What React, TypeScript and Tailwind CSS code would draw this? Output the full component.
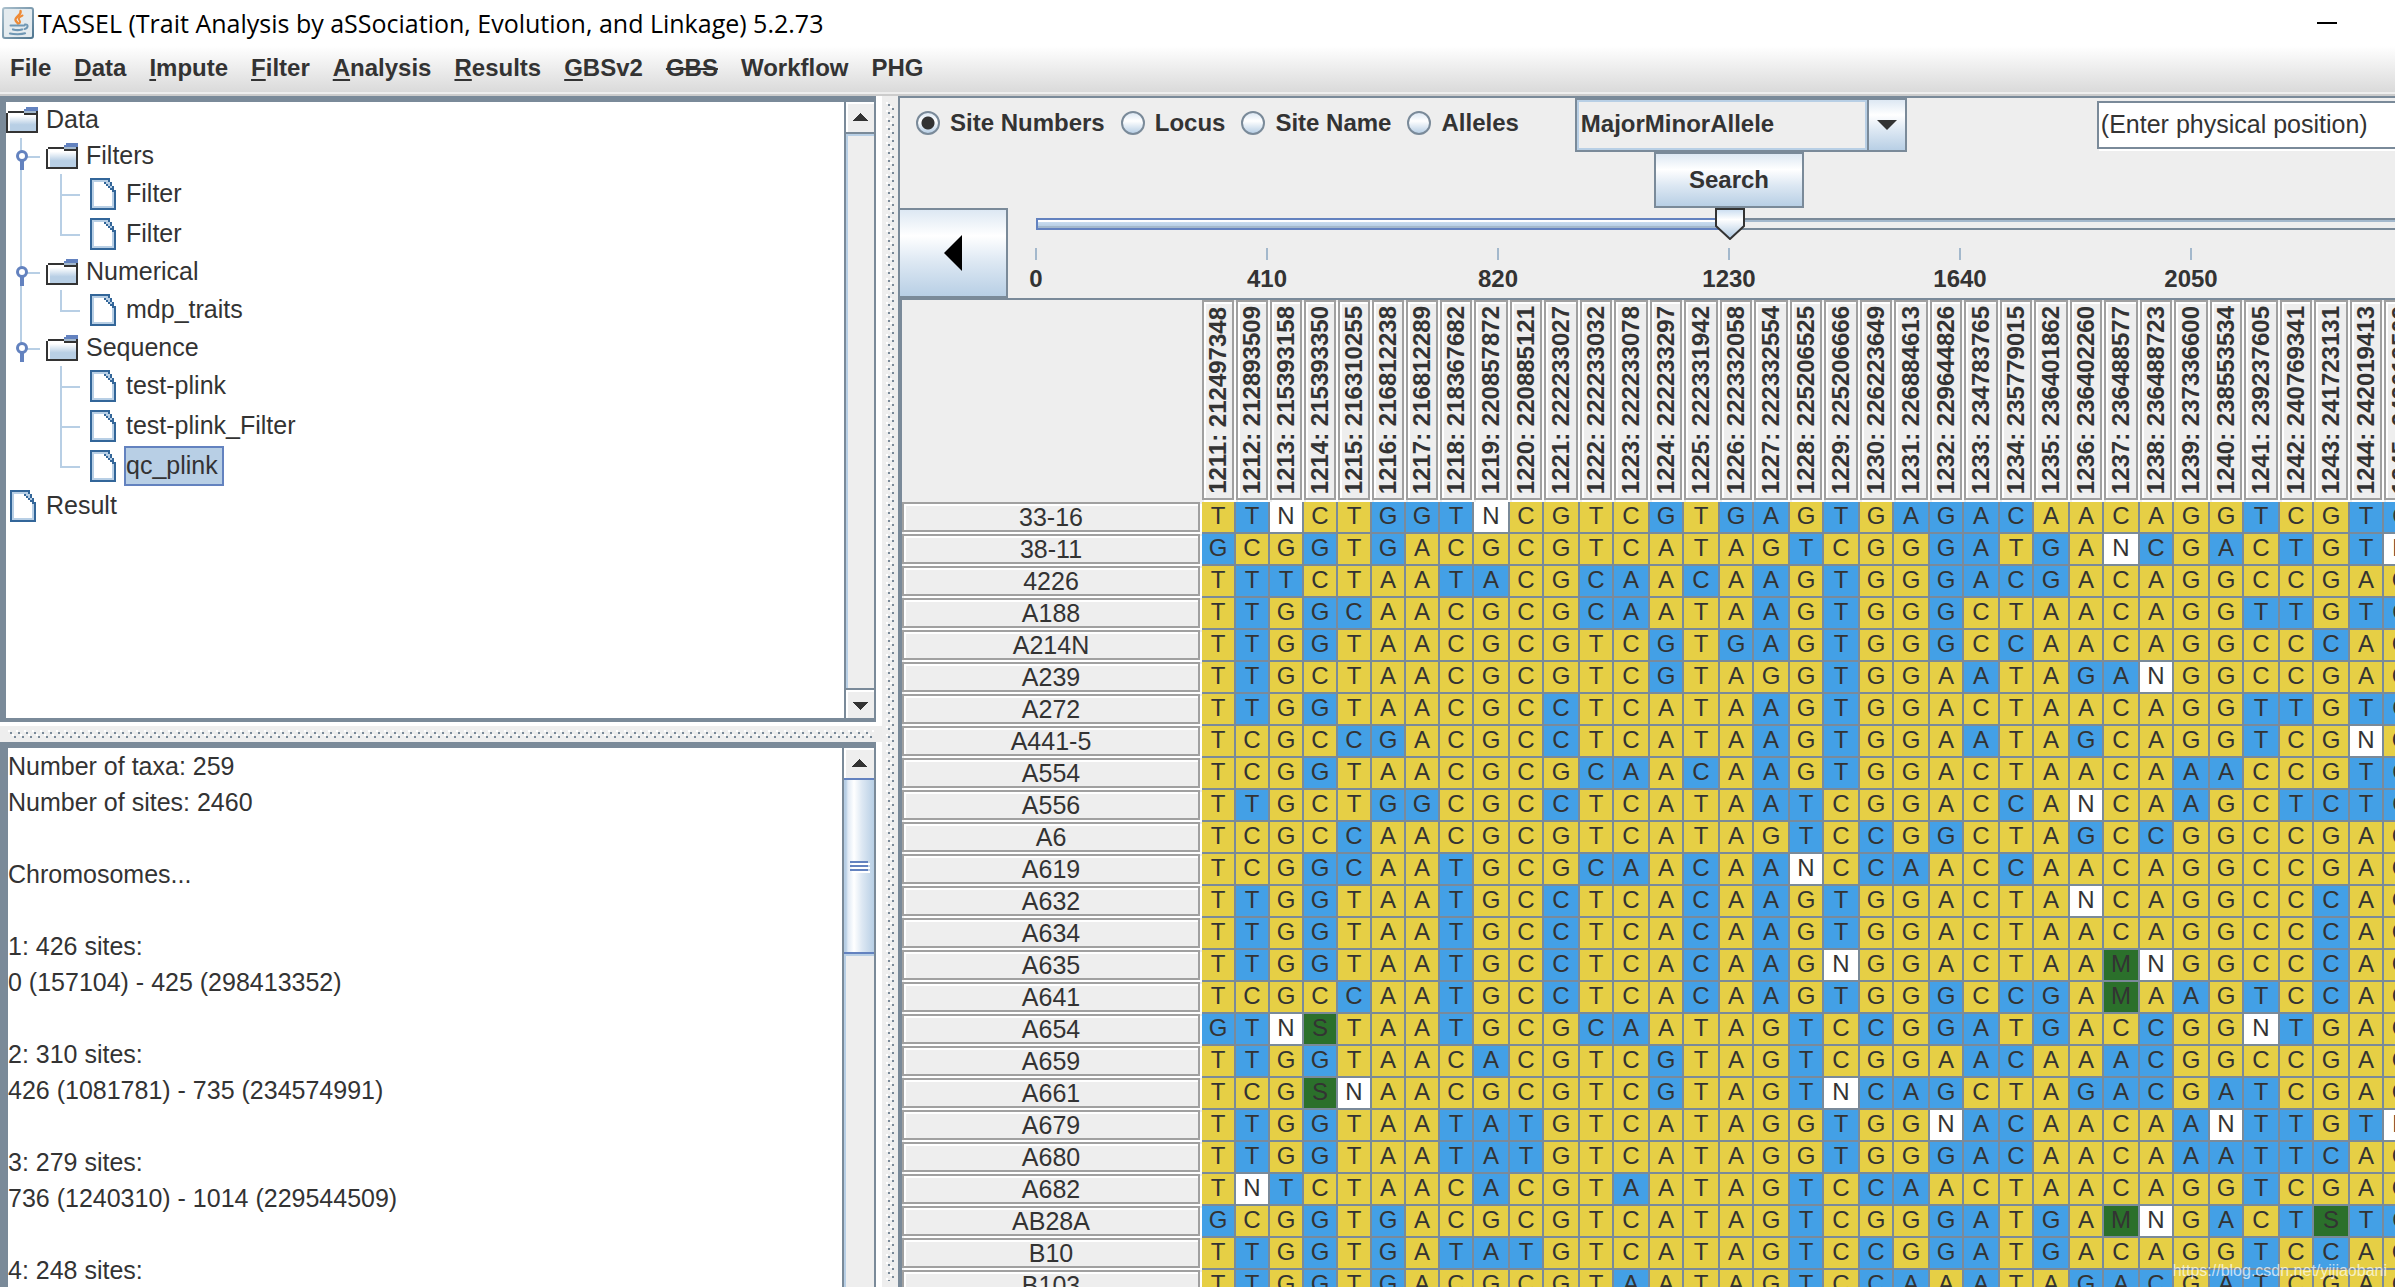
import { useState } from "react";

/* Capital = major allele, lower case = minor allele, N = unknown, M/S = heterozygous. */
const TAXA: [string, string][] = [
  ["33-16", "TtNCTggtNCGTCgTgaGtGagacAACAGGtCGtc"],
  ["38-11", "gCGgTgACGCGTCATAGtCGGgaTgANcGaCtGtN"],
  ["4226", "TttCTAAtaCGcaAcAaGtGGgacgACAGGCCGAG"],
  ["A188", "TtGgcAACGCGcaATAaGtGGgCTAACAGGttGtc"],
  ["A214N", "TtGgTAACGCGTCgTgaGtGGgCcAACAGGCCcAG"],
  ["A239", "TtGCTAACGCGTCgTAGGtGGAaTAgaNGGCCGAG"],
  ["A272", "TtGgTAACGCcTCATAaGtGGACTAACAGGttGtc"],
  ["A441-5", "TCGCcgACGCcTCATAaGtGGAaTAgCAGGtCGNG"],
  ["A554", "TCGgTAACGCGcaAcAaGtGGACTAACAaaCCGtc"],
  ["A556", "TtGCTggCGCcTCATAatCGGACcANCAaGCtctc"],
  ["A6", "TCGCcAACGCGTCATAGtCcGgCTAgCcGGCCGAG"],
  ["A619", "TCGgcAAtGCGcaAcAaNCcaACcAACAGGCCGAG"],
  ["A632", "TtGgTAAtGCcTCAcAaGtGGACTANCAGGCCcAG"],
  ["A634", "TtGgTAAtGCcTCAcAaGtGGACTAACAGGCCcAG"],
  ["A635", "TtGgTAAtGCcTCAcAaGNGGACTAAMNGGCCcAG"],
  ["A641", "TCGCcAAtGCcTCAcAaGtGGgCcgAMAaGtCcAG"],
  ["A654", "gtNSTAAtGCGcaATAGtCcGgaTgACcGGNtGAG"],
  ["A659", "TtGgTAACaCGTCgTAGtCGGAacAAacGGCCGAG"],
  ["A661", "TCGSNAACGCGTCgTAGtNcagCTAgacGatCGAG"],
  ["A679", "TtGgTAAtatGTCATAGGtGGNacAACAaNttGtN"],
  ["A680", "TtGgTAAtatGTCATAGGtGGgacAACAaattcAG"],
  ["A682", "TNtCTAACaCGTaATAGtCcaACTAACAGGtCGAG"],
  ["AB28A", "gCGgTgACGCGTCATAGtCGGgaTgAMNGaCtStc"],
  ["B10", "TtGgTgAtatGTCATAGtCcGgaTgACAGGtCcAG"],
  ["B103", "TtGgTgACGCGTaATAGtCcaAaTAgacGatCGAG"],
];

const SITES = [
  "1211: 212497348", "1212: 212893509", "1213: 215393158", "1214: 215393350", "1215: 216310255",
  "1216: 216812238", "1217: 216812289", "1218: 218367682", "1219: 220857872", "1220: 220885121",
  "1221: 222233027", "1222: 222233032", "1223: 222233078", "1224: 222233297", "1225: 222331942",
  "1226: 222332058", "1227: 222332554", "1228: 225206525", "1229: 225206666", "1230: 226223649",
  "1231: 226884613", "1232: 229644826", "1233: 234783765", "1234: 235779015", "1235: 236401862",
  "1236: 236402260", "1237: 236488577", "1238: 236488723", "1239: 237336600", "1240: 238553534",
  "1241: 239237605", "1242: 240769341", "1243: 241723131", "1244: 242019413", "1245: 242019509",
];

function cellColor(c: string) {
  if (c === "N") return "bg-white";
  if (c === "M" || c === "S") return "bg-[#2b702b]";
  return c === c.toUpperCase() ? "bg-[#e6cf45]" : "bg-[#43a0e6]";
}

const MENUS: [string, boolean, boolean][] = [
  ["File", false, false],
  ["Data", true, false],
  ["Impute", true, false],
  ["Filter", true, false],
  ["Analysis", true, false],
  ["Results", true, false],
  ["GBSv2", true, false],
  ["GBS", false, true],
  ["Workflow", false, false],
  ["PHG", false, false],
];

const REPORT = `Number of taxa: 259
Number of sites: 2460

Chromosomes...

1: 426 sites:
0 (157104) - 425 (298413352)

2: 310 sites:
426 (1081781) - 735 (234574991)

3: 279 sites:
736 (1240310) - 1014 (229544509)

4: 248 sites:`;

function JavaIcon() {
  return (
    <svg className="h-8 w-8" viewBox="0 0 32 32" aria-hidden="true">
      <defs>
        <linearGradient id="java-frame" x1="0" y1="0" x2="1" y2="1">
          <stop offset="0" stopColor="#a9bfcc" />
          <stop offset="1" stopColor="#4f7690" />
        </linearGradient>
      </defs>
      <rect x="1" y="1" width="30" height="30" rx="2" fill="#e4ebef" stroke="url(#java-frame)" strokeWidth="2" />
      <path d="M18.500 4c1.500 4-5.500 5.500-5 9 .3 1.600 1.800 2.400 2.500 3.500" fill="none" stroke="#ee8a35" strokeWidth="2.400" strokeLinecap="round" />
      <path d="M20.500 8.500c-3.500 1.500-4.500 3-3 5 1 1.400.5 2.300-.5 3" fill="none" stroke="#ee8a35" strokeWidth="2" strokeLinecap="round" />
      <path d="M8.500 18.500h14M23 17.500c3.500-.6 3.600 3.500-.6 4.600" fill="none" stroke="#6f97b4" strokeWidth="2" strokeLinecap="round" />
      <path d="M11 22.500c2.500.8 6.500.8 9 0M8 26.500c4 1 12 1 15-.2" fill="none" stroke="#6f97b4" strokeWidth="2.200" strokeLinecap="round" />
    </svg>
  );
}

function FolderIcon() {
  return (
    <svg className="h-[26px] w-8 shrink-0" viewBox="0 0 16 13" shapeRendering="crispEdges" aria-hidden="true">
      <defs>
        <linearGradient id="folder" x1="0" y1="0" x2="0" y2="1">
          <stop offset="0.150" stopColor="#fff" />
          <stop offset="0.650" stopColor="#b8cfe5" />
        </linearGradient>
      </defs>
      <rect x="0" y="3" width="1" height="10" fill="#333" />
      <rect x="1" y="2" width="8" height="1" fill="#333" />
      <rect x="15" y="2" width="1" height="11" fill="#333" />
      <rect x="0" y="12" width="16" height="1" fill="#333" />
      <rect x="1" y="3" width="14" height="9" fill="url(#folder)" />
      <rect x="1" y="3" width="1" height="9" fill="#fff" />
      <rect x="9" y="3" width="6" height="1" fill="#333" />
      <rect x="10" y="0" width="6" height="1" fill="#6382bf" />
      <rect x="9" y="1" width="7" height="1" fill="#6382bf" />
      <rect x="9" y="2" width="6" height="1" fill="#a3b8cc" />
    </svg>
  );
}

function LeafIcon() {
  return (
    <svg className="ml-1 h-8 w-[26px] shrink-0" viewBox="0 0 13 16" shapeRendering="crispEdges" aria-hidden="true">
      <path d="M1 1h8l3 6v8H1z" fill="#fff" />
      <path d="M1 1h7v1H2v12h9V7h1v8H1z" fill="#b8cfe5" />
      <path d="M8 1h1v1h1v2h1v2h-1V5H9V4H8V3H7V2h1z" fill="#b8cfe5" />
      <path d="M0 0h10v1H1v14h11V6h1v10H0z" fill="#336699" />
      <path d="M9 1h1v1H9zM7 2h1v1H7zM8 3h1v1H8zM10 2h1v2h-1zM9 4h1v1H9zM11 4h1v2h-1zM10 5h1v1h-1zM11 6h1v1h-1z" fill="#336699" />
    </svg>
  );
}

type Guide = "line" | "blank" | "tee" | "elbow" | "handle" | "lastHandle";

function GuideCell({ kind, h }: { kind: Guide; h: number }) {
  const mid = h / 2;
  const stops = kind === "elbow" || kind === "lastHandle";
  const handle = kind === "handle" || kind === "lastHandle";
  return (
    <svg className="h-full w-10 shrink-0" viewBox={`0 0 40 ${h}`} aria-hidden="true">
      {kind !== "blank" && <rect x="14" y="0" width="2" height={stops ? mid + 2 : h} fill="#b8cfe5" />}
      {(kind === "tee" || kind === "elbow") && <rect x="14" y={mid} width="20" height="2" fill="#b8cfe5" />}
      {handle && (
        <>
          <rect x="16" y={mid} width="18" height="2" fill="#b8cfe5" />
          <rect x="14" y="22" width="4" height="10" fill="#6382bf" />
          <circle cx="16" cy="18" r="4.500" fill="#fff" stroke="#6382bf" strokeWidth="3" />
        </>
      )}
    </svg>
  );
}

interface Node {
  label: string;
  guides: Guide[];
  folder?: boolean;
  selected?: boolean;
}

const NODES: Node[] = [
  { label: "Data", guides: [], folder: true },
  { label: "Filters", guides: ["handle"], folder: true },
  { label: "Filter", guides: ["line", "tee"] },
  { label: "Filter", guides: ["line", "elbow"] },
  { label: "Numerical", guides: ["handle"], folder: true },
  { label: "mdp_traits", guides: ["line", "elbow"] },
  { label: "Sequence", guides: ["lastHandle"], folder: true },
  { label: "test-plink", guides: ["blank", "tee"] },
  { label: "test-plink_Filter", guides: ["blank", "tee"] },
  { label: "qc_plink", guides: ["blank", "elbow"], selected: true },
  { label: "Result", guides: [] },
];

function Tree() {
  return (
    <ul role="tree" aria-label="Datasets" className="min-w-0 flex-1 bg-white">
      {NODES.map((n, i) => (
        <li
          key={i}
          role="treeitem"
          aria-selected={!!n.selected}
          className={n.folder ? "flex h-9 items-center" : "flex h-10 items-center"}
        >
          {n.guides.map((g, j) => (
            <GuideCell key={j} kind={g} h={n.folder ? 36 : 40} />
          ))}
          <span className="flex w-[38px] shrink-0">{n.folder ? <FolderIcon /> : <LeafIcon />}</span>
          <span
            className={
              n.selected
                ? "flex h-full items-center border-2 border-[#6382bf] bg-[#b8cfe5] pr-1"
                : "flex h-full items-center border-2 border-transparent pr-1"
            }
          >
            {n.label}
          </span>
        </li>
      ))}
    </ul>
  );
}

function ArrowButton({ down }: { down?: boolean }) {
  return (
    <button
      type="button"
      aria-label={down ? "Scroll down" : "Scroll up"}
      className={
        down
          ? "flex h-7 shrink-0 items-center justify-center bg-[#eee] pt-1 shadow-[inset_2px_2px_0_#fff]"
          : "flex h-[30px] shrink-0 items-center justify-center bg-[#eee] shadow-[inset_2px_2px_0_#fff]"
      }
    >
      <svg className="h-2 w-4" viewBox="0 0 8 4" shapeRendering="crispEdges" aria-hidden="true">
        <path d={down ? "M0 0h8L4 4z" : "M0 4h8L4 0z"} fill="#333" />
      </svg>
    </button>
  );
}

function Bumps({ id, className }: { id: string; className: string }) {
  return (
    <svg className={className} shapeRendering="crispEdges" aria-hidden="true">
      <defs>
        <pattern id={id} width="8" height="8" patternUnits="userSpaceOnUse">
          <path d="M0 0h2v2H0zM4 4h2v2H4z" fill="#fff" />
          <path d="M2 2h2v2H2zM6 6h2v2H6z" fill="#7a8a99" />
        </pattern>
      </defs>
      <rect width="100%" height="100%" fill={`url(#${id})`} />
    </svg>
  );
}

const STEEL = "bg-[linear-gradient(#dde8f3,#fff_30%,#dde8f3_60%,#b8cfe5)]";

function SliderRow() {
  const max = 2460;
  const [value, setValue] = useState(1230);
  const pct = `${(value / max) * 100}%`;
  return (
    <div className="flex h-[90px]">
      <button
        type="button"
        aria-label="Previous sites"
        className={`flex w-[108px] shrink-0 items-center justify-center border-2 border-l-0 border-[#7a8a99] ${STEEL}`}
      >
        <svg className="h-9 w-[18px]" viewBox="0 0 18 36" aria-hidden="true">
          <path d="M18 0v36L0 18z" fill="#000" />
        </svg>
      </button>
      <div className="flex-1 px-7 pt-2.5">
        <div className="relative h-3 border-2 border-[#7a8a99] shadow-[inset_0_2px_0_#a3b8cc]">
          <div
            className="absolute -top-0.5 -left-0.5 h-3 border-2 border-[#6382bf] bg-[linear-gradient(#fff_25%,#c8dcf0_25%,#b8cfe5_75%,#a3b8cc_75%)]"
            style={{ width: pct }}
          />
          <div className="absolute -top-3" style={{ left: pct }}>
            <svg className="-ml-3.5 h-8 w-[30px]" viewBox="0 0 30 32" aria-hidden="true">
              <defs>
                <linearGradient id="thumb" x1="0" y1="0" x2="0" y2="1">
                  <stop offset="0" stopColor="#c8dcf0" />
                  <stop offset="0.35" stopColor="#fff" />
                  <stop offset="0.9" stopColor="#b8cfe5" />
                </linearGradient>
              </defs>
              <path d="M1 1h28v17L15 31 1 18z" fill="url(#thumb)" stroke="#333" strokeWidth="2" />
            </svg>
          </div>
          <input
            type="range"
            aria-label="Site position"
            min={0}
            max={max}
            value={value}
            onChange={(e) => setValue(Number(e.target.value))}
            className="absolute inset-0 w-full opacity-0"
          />
        </div>
        <div className="mt-[18px] flex justify-between font-bold">
          {[0, 410, 820, 1230, 1640, 2050, 2460].map((n) => (
            <div key={n} className="flex w-0 flex-col items-center gap-1.5">
              <span className="h-3 w-0.5 bg-[#a3b8cc]" />
              <span className="leading-[26px]">{n}</span>
            </div>
          ))}
        </div>
      </div>
      <button
        type="button"
        aria-label="Next sites"
        className={`w-[108px] shrink-0 border-2 border-[#7a8a99] ${STEEL}`}
      />
    </div>
  );
}

function Controls() {
  const [view, setView] = useState("Site Numbers");
  return (
    <div className="flex flex-col items-center">
      <div className="flex h-[54px] w-full items-center px-4 font-bold">
        <div role="radiogroup" aria-label="Column labels" className="flex gap-4 pb-1">
          {["Site Numbers", "Locus", "Site Name", "Alleles"].map((o) => (
            <label key={o} className="flex items-center gap-2.5 whitespace-nowrap">
              <input
                type="radio"
                name="view"
                checked={view === o}
                onChange={() => setView(o)}
                className="h-6 w-6 appearance-none rounded-full border-2 border-[#7a8a99] bg-[linear-gradient(#dde8f3,#fff_40%,#b8cfe5)] checked:bg-[radial-gradient(circle,#333_6px,transparent_7px),linear-gradient(#dde8f3,#fff_40%,#b8cfe5)]"
              />
              {o}
            </label>
          ))}
        </div>
        <div className="ml-14 flex h-[54px] w-[332px] shrink-0 border-2 border-[#7a8a99]">
          <select
            aria-label="Color scheme"
            className="min-w-0 flex-1 appearance-none border-2 border-[#b8cfe5] bg-[#eee] pb-0.5 pl-0.5 font-bold"
          >
            <option>MajorMinorAllele</option>
          </select>
          <span className={`flex w-[38px] items-center justify-center border-l-2 border-[#7a8a99] ${STEEL}`}>
            <svg className="h-2.5 w-5" viewBox="0 0 20 10" aria-hidden="true">
              <path d="M0 0h20L10 10z" fill="#333" />
            </svg>
          </span>
        </div>
        <input
          type="text"
          aria-label="Physical position"
          defaultValue="(Enter physical position)"
          className="ml-[190px] h-12 min-w-0 flex-1 border-2 border-[#7a8a99] bg-white pb-0.5 pl-0.5 text-[25px] font-normal shadow-[2px_2px_0_#fff]"
        />
      </div>
      <button type="button" className={`h-14 w-[150px] border-2 border-[#7a8a99] font-bold ${STEEL}`}>
        Search
      </button>
    </div>
  );
}

function Genotypes() {
  return (
    <table className="w-max table-fixed border-separate border-spacing-0">
      <colgroup>
        <col className="w-[300px]" />
        {SITES.map((s, i) => (
          <col key={s} className={i >= 8 && i % 2 === 0 ? "w-9" : "w-[34px]"} />
        ))}
      </colgroup>
      <thead>
        <tr>
          <td className="p-0" />
          {SITES.map((s) => (
            <th key={s} scope="col" className="h-[202px] p-0 align-top">
              <div className="mr-0.5 flex h-[200px] items-center justify-center border-2 border-[#a0a0a0] shadow-[inset_2px_2px_0_#fff,2px_2px_0_#fff]">
                <span className="rotate-180 leading-6 font-bold whitespace-nowrap [writing-mode:vertical-rl]">{s}</span>
              </div>
            </th>
          ))}
        </tr>
      </thead>
      <tbody className="text-[25px]">
        {TAXA.map(([name, seq]) => (
          <tr key={name} className="h-8">
            <th scope="row" className="h-8 p-0 align-top font-normal">
              <div className="mr-0.5 h-[30px] border-2 border-[#a0a0a0] text-center leading-[26px] shadow-[inset_2px_2px_0_#fff,2px_2px_0_#fff]">
                {name}
              </div>
            </th>
            {seq.split("").map((c, i) => (
              <td
                key={i}
                className={`h-8 border-r-2 border-b-2 border-[#7a8a99] p-0 text-center align-top text-2xl leading-[28px] ${cellColor(c)}`}
              >
                {c.toUpperCase()}
              </td>
            ))}
          </tr>
        ))}
      </tbody>
    </table>
  );
}

export default function App() {
  return (
    <div className="relative flex h-screen flex-col overflow-hidden bg-[#eee] font-['Liberation_Sans',Arial,sans-serif] text-2xl text-[#333]">
      <header className="flex h-[46px] shrink-0 items-center bg-white pr-[58px] pl-0.5 text-black">
        <JavaIcon />
        <h1 className="ml-1 flex-1 font-['Open_Sans','Noto_Sans',sans-serif] text-[25px] leading-8 font-normal">
          TASSEL (Trait Analysis by aSSociation, Evolution, and Linkage) 5.2.73
        </h1>
        <button type="button" aria-label="Minimize" className="flex h-full w-5 items-center">
          <span className="h-0.5 w-full bg-black" />
        </button>
      </header>

      <nav
        aria-label="Main menu"
        className="flex h-[50px] shrink-0 items-center gap-[23px] border-b-2 border-[#ccc] bg-[linear-gradient(#fff,#dadada_46px,#eee_46px)] pb-1 pl-2.5 font-bold"
      >
        {MENUS.map(([m, mnemonic, struck]) => (
          <button key={m} type="button" className={struck ? "line-through decoration-2" : ""}>
            {mnemonic ? (
              <>
                <span className="underline decoration-2 underline-offset-3">{m[0]}</span>
                {m.slice(1)}
              </>
            ) : (
              m
            )}
          </button>
        ))}
      </nav>

      <main className="grid min-h-0 flex-1 grid-cols-[882px_16px_1fr]">
        <div className="grid min-h-0 grid-rows-[630px_16px_1fr] bg-white">
          <section className="mr-1.5 mb-1 flex border-t-[6px] border-r-2 border-b-4 border-l-[6px] border-[#7a8a99] text-[25px]">
            <Tree />
            <div className="flex w-[30px] flex-col border-l-2 border-[#7a8a99] bg-[#eee]">
              <ArrowButton />
              <div className="flex-1 border-y-2 border-[#7a8a99] shadow-[inset_2px_2px_0_#b8cfe5]" />
              <ArrowButton down />
            </div>
          </section>

          <div className="flex bg-[#eee] px-2 pt-1 pb-1">
            <Bumps id="bumps-h" className="h-2 w-full" />
          </div>

          <section className="mr-1.5 flex min-h-0 border-t-[6px] border-r-2 border-l-8 border-[#7a8a99]">
            <textarea
              readOnly
              aria-label="Dataset report"
              value={REPORT}
              className="min-w-0 flex-1 resize-none overflow-hidden bg-white text-[25px] leading-9"
            />
            <div className="flex w-[32px] flex-col border-l-2 border-[#7a8a99] bg-[#eee]">
              <ArrowButton />
              <div className="flex h-[176px] shrink-0 flex-col items-center justify-center gap-0.5 border-y-2 border-[#6382bf] bg-[linear-gradient(90deg,#b8cfe5_2px,#e0eaf5_4px,#fff_10px,#dde8f3_18px,#b8cfe5)]">
                <span className="h-0.5 w-4.5 bg-[#6382bf] shadow-[2px_2px_0_#fff]" />
                <span className="h-0.5 w-4.5 bg-[#6382bf] shadow-[2px_2px_0_#fff]" />
                <span className="h-0.5 w-4.5 bg-[#6382bf] shadow-[2px_2px_0_#fff]" />
              </div>
              <div className="flex-1 shadow-[inset_2px_2px_0_#b8cfe5]" />
            </div>
          </section>
        </div>

        <div className="flex bg-[#eee] px-1 py-1.5">
          <Bumps id="bumps-v" className="h-full w-2" />
        </div>

        <section className="min-h-0 min-w-0 overflow-hidden border-t-2 border-l-2 border-[#7a8a99]">
          <div className="min-w-[1658px]">
            <Controls />
            <SliderRow />
            <div className="border-t-2 border-l-2 border-[#7a8a99]">
              <Genotypes />
            </div>
          </div>
        </section>
      </main>

      <p className="absolute right-2 bottom-1 text-base leading-6 text-white/70">https://blog.csdn.net/yijiaobani</p>
    </div>
  );
}
